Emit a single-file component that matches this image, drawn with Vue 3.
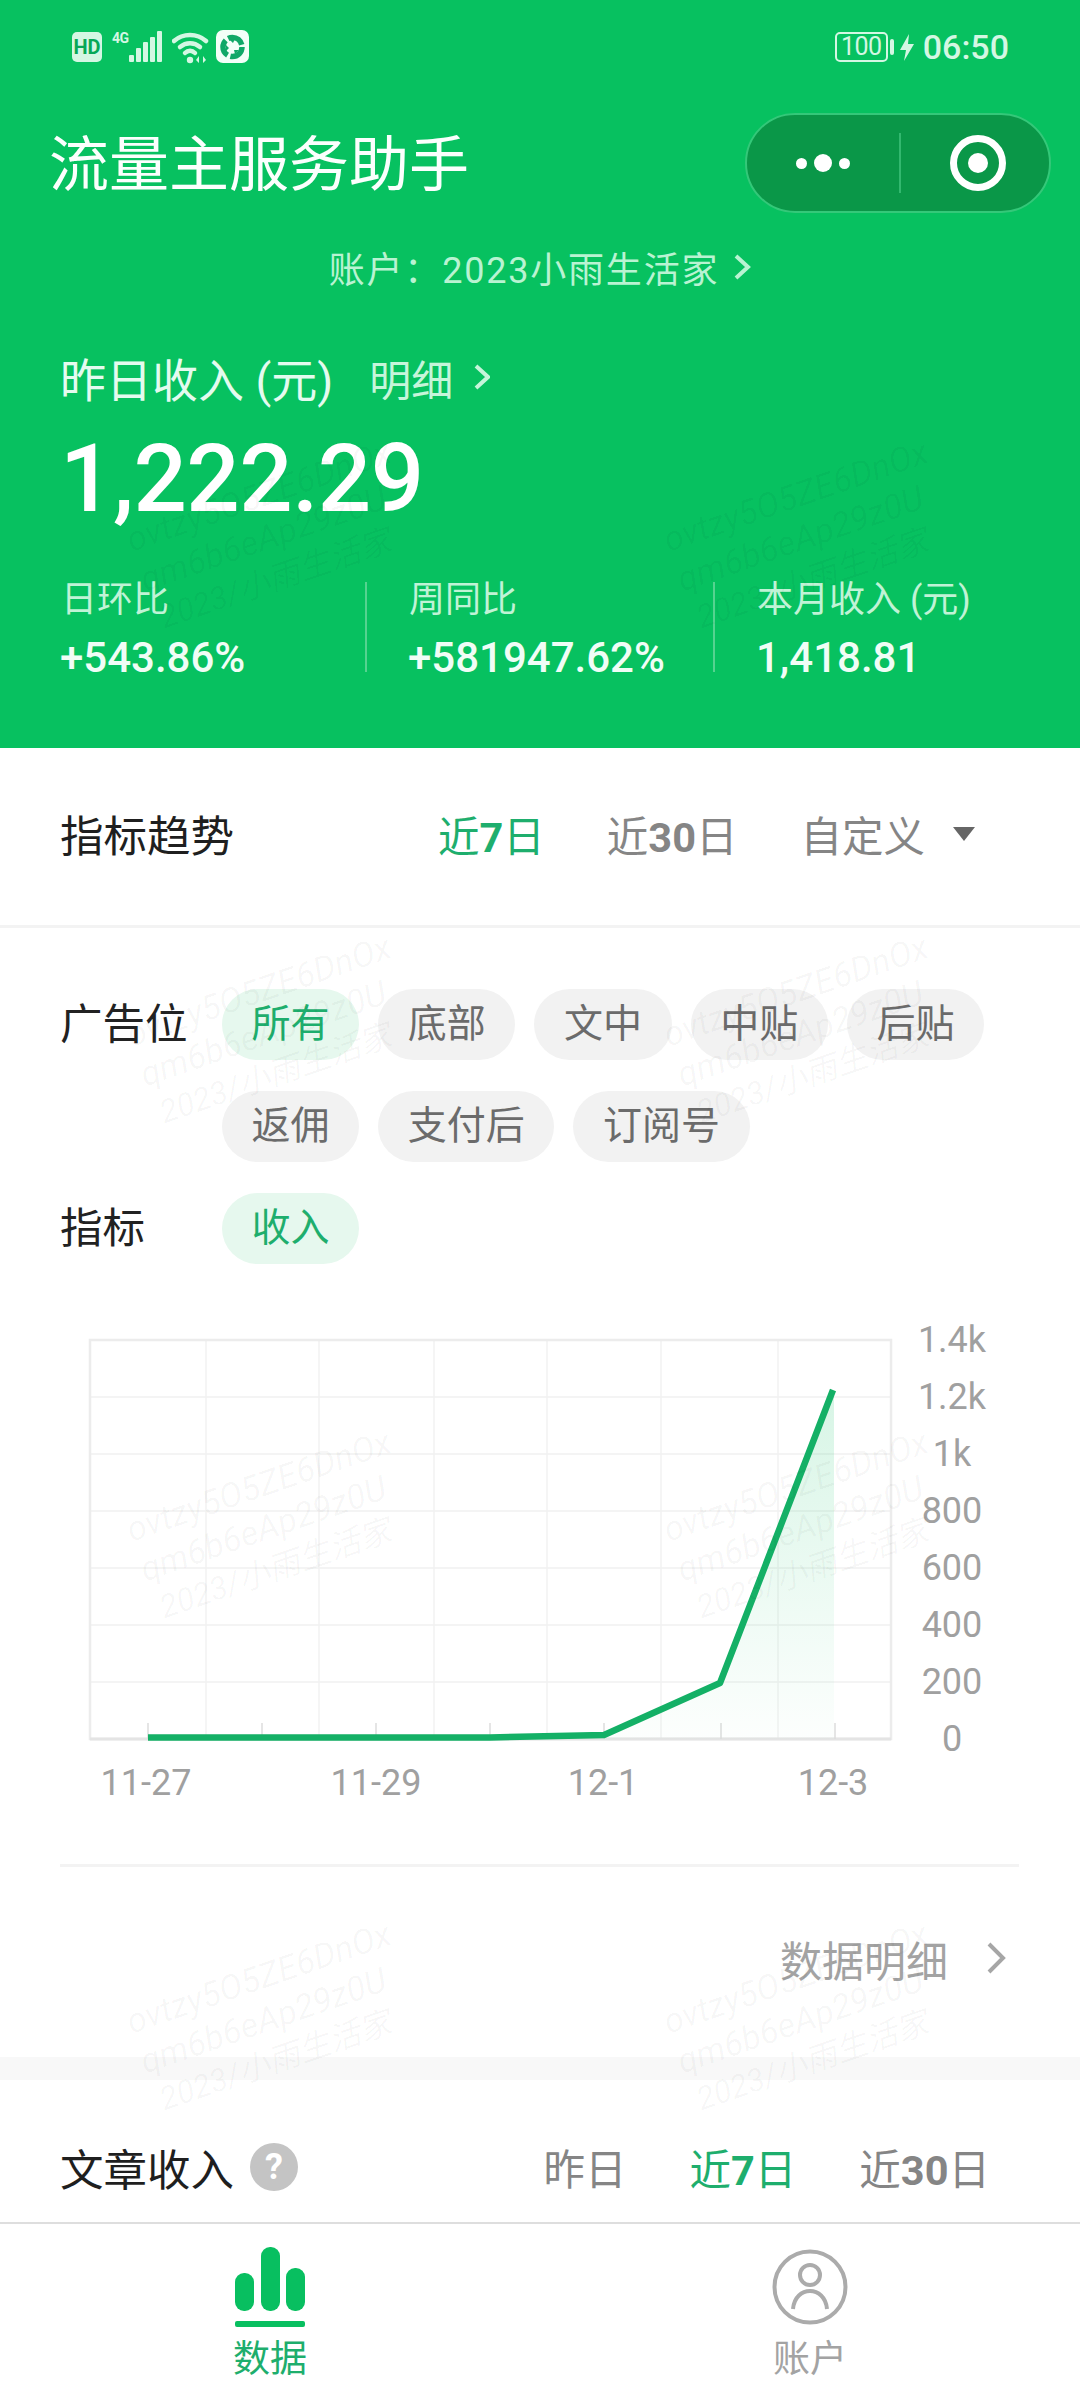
<script setup>
const pillsAd = [
  { t: '所有', on: true }, { t: '底部' }, { t: '文中' }, { t: '中贴' }, { t: '后贴' },
  { t: '返佣' }, { t: '支付后' }, { t: '订阅号' },
]
const stats = [
  { k: '日环比', v: '+543.86%' },
  { k: '周同比', v: '+581947.62%' },
  { k: '本月收入 (元)', v: '1,418.81' },
]
const gridY = [1341, 1398, 1455, 1512, 1569, 1626, 1683, 1740]
const gridX = [90, 206, 319, 434, 547, 661, 778, 891]
const ticks = [148, 262, 376, 490, 604, 721, 835]
const yLabels = ['1.4k', '1.2k', '1k', '800', '600', '400', '200', '0']
const xLabels = [
  { x: 146, t: '11-27' }, { x: 376, t: '11-29' }, { x: 603, t: '12-1' }, { x: 833, t: '12-3' },
]
const marks = [
  { x: 302, y: 525, dark: true }, { x: 839, y: 525, dark: true },
  { x: 302, y: 1020 }, { x: 839, y: 1020 },
  { x: 302, y: 1515 }, { x: 839, y: 1515 },
  { x: 302, y: 2007 }, { x: 839, y: 2007 },
]
const markStyle = (m) => ({ left: m.x - 170 + 'px', top: m.y - 63 + 'px' })
</script>

<template>
  <div class="page">
    <header class="hero">
      <div class="status">
        <div class="status-left">
          <span class="hd">HD</span>
          <span class="net">4G</span>
          <svg class="signal" width="33" height="32" viewBox="0 0 33 32" fill="#d4f7e3">
            <rect x="0" y="24" width="5" height="7" rx="1" />
            <rect x="7" y="17" width="5" height="14" rx="1" />
            <rect x="14" y="11" width="5" height="20" rx="1" />
            <rect x="21" y="6" width="5" height="25" rx="1" />
            <rect x="28" y="0" width="5" height="31" rx="1" />
          </svg>
          <svg class="wifi" width="37" height="32" viewBox="0 0 37 32" fill="none" stroke="#d4f7e3" stroke-width="4.5" stroke-linecap="round">
            <path d="M2 9 C11 1 25 1 34 9" />
            <path d="M8 15 C14 10 22 10 28 15" />
            <path d="M13 21 C16 18 20 18 23 21" />
            <circle cx="18" cy="28" r="3.2" fill="#d4f7e3" stroke="none" />
            <path d="M27 24 L24 28 L27 31 Z M31 24 L34 28 L31 31 Z" fill="#d4f7e3" stroke="none" />
          </svg>
          <svg class="app" width="33" height="33" viewBox="0 0 33 33">
            <rect width="33" height="33" rx="7" fill="#f2fff8" />
            <circle cx="16.5" cy="17" r="9.5" fill="none" stroke="#10a868" stroke-width="5.5" stroke-dasharray="17 3" />
            <path d="M14 10 L19 9 L17 13 Z M23 20 L19 24 L18 20 Z M10 21 L10 15 L13 18 Z" fill="#10a868" />
          </svg>
        </div>
        <div class="status-right">
          <span class="battery"><span>100</span></span>
          <span class="nub"></span>
          <svg width="14" height="27" viewBox="0 0 14 27" fill="#d4f7e3"><path d="M9 0 L0 16 L6 16 L4 27 L14 10 L8 10 Z" /></svg>
          <span class="time">06:50</span>
        </div>
      </div>

      <div class="title-row">
        <h1 class="title">流量主服务助手</h1>
        <div class="capsule">
          <div class="cap-dots"><i class="d-s"></i><i class="d-l"></i><i class="d-s"></i></div>
          <div class="cap-line"></div>
          <div class="cap-ring"><i></i></div>
        </div>
      </div>

      <div class="account">
        <span>账户：2023小雨生活家</span>
        <svg width="18" height="26" viewBox="0 0 18 26" fill="none" stroke="#b9f3d2" stroke-width="4"><path d="M3 2 L15 13 L3 24" /></svg>
      </div>

      <div class="income-head">
        <span class="income-label">昨日收入 (元)</span>
        <span class="income-link">明细</span>
        <svg width="16" height="26" viewBox="0 0 16 26" fill="none" stroke="#c6f5da" stroke-width="4"><path d="M2 2 L14 13 L2 24" /></svg>
      </div>
      <div class="income-value">1,222.29</div>

      <div class="stats">
        <div v-for="s in stats" :key="s.k" class="stat">
          <div class="stat-k">{{ s.k }}</div>
          <div class="stat-v">{{ s.v }}</div>
        </div>
      </div>
    </header>

    <main class="body">
      <section class="trend-head">
        <h2 class="sec-title">指标趋势</h2>
        <div class="trend-tabs">
          <span class="tab on">近<b>7</b>日</span>
          <span class="tab">近<b>30</b>日</span>
          <span class="tab">自定义</span>
          <i class="caret"></i>
        </div>
      </section>

      <section class="filters">
        <div class="filter-row">
          <div class="filter-label">广告位</div>
          <div class="pills">
            <span v-for="p in pillsAd" :key="p.t" class="pill" :class="{ active: p.on }">{{ p.t }}</span>
          </div>
        </div>
        <div class="filter-row">
          <div class="filter-label">指标</div>
          <div class="pills"><span class="pill active">收入</span></div>
        </div>
      </section>

      <svg class="chart" width="1080" height="530" viewBox="0 1300 1080 530">
        <defs>
          <linearGradient id="area" x1="0" y1="0" x2="0" y2="1">
            <stop offset="0" stop-color="#07c160" stop-opacity="0.16" />
            <stop offset="1" stop-color="#07c160" stop-opacity="0.01" />
          </linearGradient>
        </defs>
        <line v-for="y in gridY.slice(1, -1)" :key="'h' + y" x1="90" x2="891" :y1="y" :y2="y" stroke="#f0f0f0" stroke-width="1.5" />
        <line v-for="x in gridX.slice(1, -1)" :key="'v' + x" y1="1341" y2="1740" :x1="x" :x2="x" stroke="#f2f2f2" stroke-width="1.5" />
        <rect x="90" y="1341" width="801" height="399" fill="none" stroke="#ececec" stroke-width="2.5" />
        <line x1="90" x2="891" y1="1740" y2="1740" stroke="#e4e4e4" stroke-width="3" />
        <line v-for="x in ticks" :key="'t' + x" y1="1724" y2="1740" :x1="x" :x2="x" stroke="#dcdcdc" stroke-width="1.5" />
        <polygon points="148,1739 604,1737 720,1684 834,1391 834,1740 148,1740" fill="url(#area)" />
        <polyline points="148,1738.5 490,1738.5 604,1736 720,1684 833,1391" fill="none" stroke="#14b066" stroke-width="6.5" stroke-linejoin="round" />
        <text v-for="(t, i) in yLabels" :key="t" class="ylab" x="952" :y="gridY[i] + 12" text-anchor="middle">{{ t }}</text>
        <text v-for="l in xLabels" :key="l.t" class="xlab" :x="l.x" y="1796" text-anchor="middle">{{ l.t }}</text>
      </svg>

      <div class="rule"></div>
      <div class="detail-row">
        <span>数据明细</span>
        <svg width="20" height="32" viewBox="0 0 20 32" fill="none" stroke="#a6a6a6" stroke-width="4"><path d="M3 2 L17 16 L3 30" /></svg>
      </div>
      <div class="band"></div>

      <section class="article">
        <div class="article-left">
          <h2 class="sec-title">文章收入</h2>
          <span class="help">?</span>
        </div>
        <div class="article-tabs">
          <span class="tab">昨日</span>
          <span class="tab on">近<b>7</b>日</span>
          <span class="tab">近<b>30</b>日</span>
        </div>
      </section>
    </main>

    <nav class="tabbar">
      <div class="tabitem active">
        <svg width="70" height="80" viewBox="0 0 70 80" fill="#08bf60">
          <rect x="0" y="26" width="19" height="38" rx="9" />
          <rect x="26" y="0" width="19" height="64" rx="9" />
          <rect x="51" y="21" width="19" height="43" rx="9" />
          <rect x="0" y="74" width="70" height="6" rx="2" />
        </svg>
        <span>数据</span>
      </div>
      <div class="tabitem">
        <svg width="76" height="80" viewBox="0 0 76 80" fill="none" stroke="#ababab" stroke-width="4">
          <circle cx="38" cy="40" r="35.5" />
          <circle cx="38" cy="28" r="10" />
          <path d="M21 62 C23 38 53 38 55 62" />
        </svg>
        <span>账户</span>
      </div>
    </nav>

    <div class="marks">
      <div v-for="(m, i) in marks" :key="i" class="mark" :class="{ dark: m.dark }" :style="markStyle(m)">
        <div>ovtzy5O5ZE6DnOx</div>
        <div>qm6b6eAp29z0U</div>
        <div class="mark-cn">2023/小雨生活家</div>
      </div>
    </div>
  </div>
</template>

<style>
html, body { margin: 0; background: #fff; }
</style>

<style scoped>
.page {
  position: relative;
  width: 1080px;
  height: 2400px;
  overflow: hidden;
  display: flex;
  flex-direction: column;
  background: #fff;
  font-family: Roboto, "Noto Sans CJK SC", sans-serif;
}
h1, h2 { margin: 0; font-weight: 400; }

.hero {
  height: 748px;
  box-sizing: border-box;
  background: #07c160;
  color: #fff;
  flex: none;
}
.status {
  height: 113px;
  box-sizing: border-box;
  padding: 30px 71px 0 72px;
  display: flex;
  justify-content: space-between;
  align-items: flex-start;
  color: #d4f7e3;
}
.status-left { display: flex; align-items: flex-start; }
.hd {
  width: 30px; height: 30px; margin-top: 2px;
  border-radius: 5px;
  background: #d4f7e3;
  color: #07a857;
  font-size: 20px; font-weight: 700;
  line-height: 30px; text-align: center;
}
.net { width: 18px; margin-left: 10px; margin-top: 1px; font-size: 14px; font-weight: 700; line-height: 14px; letter-spacing: -0.5px; white-space: nowrap; }
.signal { margin-top: 1px; margin-left: -1px; }
.wifi { margin-left: 10px; margin-top: 2px; }
.app { margin-left: 7px; }
.status-right { display: flex; align-items: center; height: 34px; }
.battery {
  box-sizing: border-box;
  width: 53px; height: 30px;
  border: 2.5px solid #d4f7e3;
  border-radius: 5px;
  font-size: 25px; line-height: 25px; text-align: center;
  letter-spacing: -0.5px;
}
.nub { width: 4px; height: 16px; margin: 0 6px 0 2px; background: #d4f7e3; border-radius: 2px; }
.time { margin-left: 9px; font-size: 34px; font-weight: 500; line-height: 34px; }

.title-row {
  height: 100px;
  padding: 0 29px 0 49px;
  display: flex;
  justify-content: space-between;
  align-items: center;
}
.title { padding-top: 6px; font-size: 60px; line-height: 94px; color: #fbfffd; }
.capsule {
  box-sizing: border-box;
  width: 306px; height: 100px;
  border-radius: 50px;
  background: #0a9748;
  border: 2px solid #34c879;
  display: flex;
  align-items: center;
}
.cap-dots { width: 152px; display: flex; justify-content: center; align-items: center; gap: 7px; }
.cap-dots i { display: block; border-radius: 50%; background: #fff; }
.d-s { width: 11px; height: 11px; }
.d-l { width: 18px; height: 18px; }
.cap-line { width: 2px; height: 60px; background: #33b86f; }
.cap-ring {
  box-sizing: border-box;
  width: 56px; height: 56px;
  margin-left: 49px;
  border: 7px solid #fff;
  border-radius: 50%;
  display: flex; align-items: center; justify-content: center;
}
.cap-ring i { display: block; width: 20px; height: 20px; border-radius: 50%; background: #fff; }

.account {
  height: 108px;
  display: flex;
  align-items: center;
  justify-content: center;
  gap: 14px;
  color: #b9f3d2;
  font-size: 36px;
  letter-spacing: 1.8px;
}
.income-head {
  box-sizing: border-box;
  height: 120px;
  padding: 0 0 8px 60px;
  display: flex;
  align-items: center;
  color: #e4fbef;
}
.income-label { font-size: 46px; }
.income-link { margin-left: 36px; font-size: 42px; color: #c6f5da; }
.income-head svg { margin-left: 21px; }
.income-value {
  height: 70px;
  margin-top: 3px;
  padding-left: 60px;
  font-size: 94px;
  font-weight: 500;
  line-height: 70px;
  letter-spacing: -0.5px;
}
.stats {
  margin-top: 68px;
  display: flex;
  padding-left: 62px;
}
.stat {
  flex: none;
  width: 348px;
  box-sizing: border-box;
  position: relative;
}
.stat + .stat::before {
  content: "";
  position: absolute;
  left: -45px; top: 0;
  width: 2px; height: 90px;
  background: #55d390;
}
.stat-k { margin-left: -1px; font-size: 36px; line-height: 36px; color: #c0f3d6; white-space: nowrap; }
.stat-v { margin-top: 20px; margin-left: -2px; font-size: 42px; font-weight: 500; line-height: 40px; color: #f0fdf6; white-space: nowrap; }

.body { flex: 1; min-height: 0; }
.trend-head {
  box-sizing: border-box;
  height: 180px;
  padding: 0 105px 6px 60px;
  border-bottom: 3px solid #f3f3f3;
  display: flex;
  align-items: center;
  justify-content: space-between;
}
.sec-title { font-size: 43.5px; color: #1f1f1f; }
.trend-tabs { display: flex; align-items: center; }
.tab { font-size: 41.5px; color: #858585; }
.tab b { font-family: Roboto, sans-serif; font-weight: 700; }
.tab.on { color: #1eae6d; }
.trend-tabs .tab + .tab { margin-left: 62px; }
.trend-tabs .tab:nth-child(3) { margin-left: 63px; }
.caret {
  margin-left: 28px;
  width: 0; height: 0;
  border-left: 11px solid transparent;
  border-right: 11px solid transparent;
  border-top: 14px solid #666;
}

.filters { padding: 61px 0 0 60px; display: flex; flex-direction: column; gap: 31px; }
.filter-row { display: flex; align-items: flex-start; }
.filter-label { width: 162px; flex: none; font-size: 42.5px; line-height: 71px; color: #222; }
.pills { width: 797px; display: flex; flex-wrap: wrap; gap: 31px 19px; }
.pill {
  height: 71px;
  padding: 0 29.6px;
  border-radius: 36px;
  background: #f2f2f2;
  color: #6b6b6b;
  font-size: 39px;
  line-height: 71px;
}
.pill.active { background: #e6f8ee; color: #1eae6d; }

.chart { display: block; margin-top: 35px; }
.ylab, .xlab { font-family: Roboto, sans-serif; font-size: 36px; fill: #a0a0a0; }

.rule { height: 3px; margin: 35px 61px 0 60px; background: #f3f3f3; }
.detail-row {
  box-sizing: border-box;
  height: 190px;
  padding: 0 74px 8px 0;
  display: flex;
  align-items: center;
  justify-content: flex-end;
  gap: 38px;
  color: #a3a3a3;
  font-size: 42px;
}
.band { height: 23px; background: #f8f8f8; }
.article {
  box-sizing: border-box;
  height: 142px;
  padding: 32px 90px 0 60px;
  display: flex;
  align-items: center;
  justify-content: space-between;
}
.article-left { display: flex; align-items: center; }
.help {
  width: 48px; height: 48px;
  margin-left: 16px;
  border-radius: 50%;
  background: #c4c4c4;
  color: #fff;
  font-size: 36px; font-weight: 700;
  line-height: 48px;
  text-align: center;
}
.article-tabs { display: flex; align-items: center; gap: 63px; }

.tabbar {
  flex: none;
  box-sizing: border-box;
  height: 178px;
  border-top: 2px solid #dedede;
  background: #fff;
  display: flex;
}
.tabitem {
  width: 540px;
  padding-top: 23px;
  box-sizing: border-box;
  display: flex;
  flex-direction: column;
  align-items: center;
  color: #a3a3a3;
  font-size: 37px;
  line-height: 40px;
}
.tabitem svg { display: block; margin-bottom: 13px; }
.tabitem.active { color: #1eae6d; }

.marks { position: absolute; inset: 0; pointer-events: none; }
.mark {
  position: absolute;
  width: 340px;
  font-size: 34.5px;
  line-height: 42px;
  color: rgba(0, 0, 0, 0.035);
  font-style: italic;
  white-space: nowrap;
  transform: rotate(-19deg);
}
.mark-cn { font-size: 32px; padding-left: 6px; }
.mark.dark { color: rgba(0, 0, 0, 0.035); }
</style>
